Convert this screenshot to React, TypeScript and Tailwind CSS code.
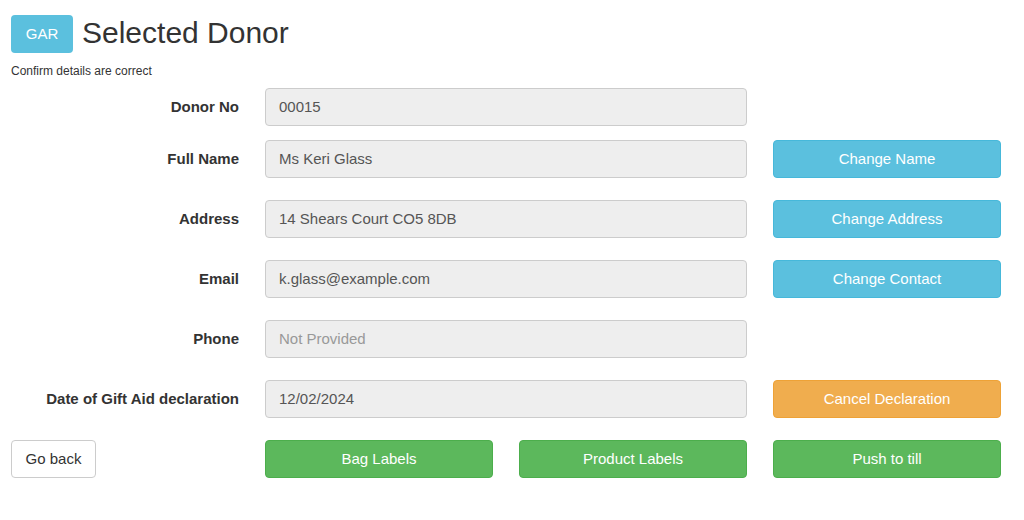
import React from 'react';

const font = { fontFamily: '"Liberation Sans", Arial, sans-serif' };

type Row = { label: string; value: string; muted?: boolean; action?: { text: string; tone: 'info' | 'warning' } };

const rows: Row[] = [
  { label: 'Full Name', value: 'Ms Keri Glass', action: { text: 'Change Name', tone: 'info' } },
  { label: 'Address', value: '14 Shears Court CO5 8DB', action: { text: 'Change Address', tone: 'info' } },
  { label: 'Email', value: 'k.glass@example.com', action: { text: 'Change Contact', tone: 'info' } },
  { label: 'Phone', value: 'Not Provided', muted: true },
  { label: 'Date of Gift Aid declaration', value: '12/02/2024', action: { text: 'Cancel Declaration', tone: 'warning' } },
];

function Field({ value, muted }: { value: string; muted?: boolean }) {
  return (
    <div
      className={`h-[38px] flex items-center px-[13px] bg-[#eeeeee] border border-[#cccccc] rounded-[4px] text-[15px] ${
        muted ? 'text-[#999999]' : 'text-[#555555]'
      }`}
    >
      {value}
    </div>
  );
}

function Btn({ text, tone }: { text: string; tone: 'info' | 'warning' | 'success' }) {
  const colors = {
    info: 'bg-[#5bc0de] border-[#46b8da]',
    warning: 'bg-[#f0ad4e] border-[#eea236]',
    success: 'bg-[#5cb85c] border-[#4cae4c]',
  }[tone];
  return (
    <button className={`h-[38px] w-full rounded-[4px] border text-white text-[15px] ${colors}`}>{text}</button>
  );
}

export default function App() {
  return (
    <div className="min-h-screen bg-white pl-[11px] text-[#333333]" style={font}>
      {/* Header */}
      <div className="pt-[15px] flex items-center gap-[9px]">
        <span className="h-[38px] w-[62px] flex items-center justify-center rounded-[4px] bg-[#5bc0de] text-white text-[15px]">
          GAR
        </span>
        <h1 className="text-[30px] leading-none text-[#333333] pb-[3px]">Selected Donor</h1>
      </div>
      <p className="mt-[11px] text-[12px] leading-[14px] text-[#333333]">Confirm details are correct</p>

      {/* Form */}
      <div className="mt-[10px] grid grid-cols-[228px_228px_228px_228px] gap-x-[26px]">
        <div className="h-[38px] flex items-center justify-end font-bold text-[15px]">Donor No</div>
        <div className="col-span-2">
          <Field value="00015" />
        </div>
        <div />

        {rows.map((r, i) => (
          <React.Fragment key={r.label}>
            <div
              className={`h-[38px] flex items-center justify-end font-bold text-[15px] ${i === 0 ? 'mt-[14px]' : 'mt-[22px]'}`}
            >
              {r.label}
            </div>
            <div className={`col-span-2 ${i === 0 ? 'mt-[14px]' : 'mt-[22px]'}`}>
              <Field value={r.value} muted={r.muted} />
            </div>
            <div className={i === 0 ? 'mt-[14px]' : 'mt-[22px]'}>
              {r.action && <Btn text={r.action.text} tone={r.action.tone} />}
            </div>
          </React.Fragment>
        ))}

        <div className="mt-[22px]">
          <button className="h-[38px] w-[85px] rounded-[4px] border border-[#cccccc] bg-white text-[15px] text-[#333333]">
            Go back
          </button>
        </div>
        <div className="mt-[22px]">
          <Btn text="Bag Labels" tone="success" />
        </div>
        <div className="mt-[22px]">
          <Btn text="Product Labels" tone="success" />
        </div>
        <div className="mt-[22px]">
          <Btn text="Push to till" tone="success" />
        </div>
      </div>
    </div>
  );
}
